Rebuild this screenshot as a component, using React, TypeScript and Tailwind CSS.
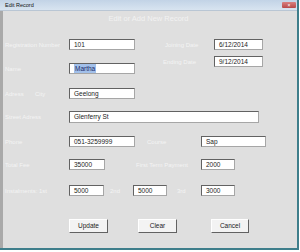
import React from "react";

const label = "text-[6px] leading-none text-[#f4f4f4] whitespace-nowrap";
const box =
  "h-[11px] bg-white border border-[#a6a6a6] border-t-[#626262] border-l-[#626262] pl-[4px] flex items-center text-[6.5px] text-[#1b1b1b] whitespace-nowrap";

function Box({ w, children }: { w: string; children?: React.ReactNode }) {
  return <div className={`${box} ${w}`}>{children}</div>;
}

function Btn({ w, children }: { w: string; children: React.ReactNode }) {
  return (
    <div
      className={`${w} h-[14px] flex items-center justify-center bg-[#f3f3f3] border border-t-white border-l-white border-b-[#626262] border-r-[#626262] text-[6.5px] text-[#1b1b1b]`}
    >
      {children}
    </div>
  );
}

export default function App() {
  return (
    <div className="w-[300px] h-[252px] bg-white font-['Liberation_Sans',sans-serif]">
      <div className="w-[299px] h-[250px] flex flex-col border-r-2 border-b-2 border-[#3e7e8b] bg-[#dfdfdf]">
        {/* title bar */}
        <div className="h-[11px] flex items-center justify-between bg-gradient-to-b from-[#c2d3e6] to-[#d8e4f0] border-b border-[#b9c6d4]">
          <span className="pl-[5px] text-[5.5px] text-[#111]">Edit Record</span>
          <div className="mr-[1px] w-[14px] h-[6px] rounded-[1px] bg-gradient-to-b from-[#d98080] to-[#b84848] flex items-center justify-center text-[5px] leading-none text-white">
            ×
          </div>
        </div>

        <div className="flex-1 flex flex-col border-l-[3px] border-[#a9a9a9] pl-[2px]">
          <div className="h-[16px] flex items-center justify-center pr-[5px] text-[7.5px] text-[#f2f2f2]">
            Edit or Add New Record
          </div>

          {/* top block */}
          <div className="mt-[12px] flex">
            <div className="flex flex-col">
              <div className="flex items-center">
                <span className={`${label} w-[64px]`}>Registration Number</span>
                <Box w="w-[66px]">101</Box>
              </div>
              <div className="mt-[13px] flex items-center">
                <span className={`${label} w-[64px]`}>Name</span>
                <Box w="w-[66px]">
                  <span className="bg-[#a2c0ea] text-[#1a2a66] px-[1px]">Martha</span>
                </Box>
              </div>
            </div>
            <div className="ml-[28px] flex flex-col">
              <div className="flex items-center">
                <span className={`${label} w-[51px] pl-[2px]`}>Joining Date</span>
                <Box w="w-[49px]">6/12/2014</Box>
              </div>
              <div className="mt-[6px] flex items-center">
                <span className={`${label} w-[51px]`}>Ending Date</span>
                <Box w="w-[49px]">9/12/2014</Box>
              </div>
            </div>
          </div>

          <div className="mt-[14px] flex items-center">
            <span className={`${label} w-[30px]`}>Adress</span>
            <span className={`${label} w-[34px]`}>City</span>
            <Box w="w-[66px]">Geelong</Box>
          </div>

          <div className="mt-[12px] flex items-center">
            <span className={`${label} w-[64px]`}>Street Adress</span>
            <Box w="w-[190px] h-[12px]">Glenferry St</Box>
          </div>

          <div className="mt-[13px] flex items-center">
            <span className={`${label} w-[64px]`}>Phone</span>
            <Box w="w-[66px]">051-3259999</Box>
            <span className={`${label} ml-[12px] w-[54px]`}>Course</span>
            <Box w="w-[65px]">Sap</Box>
          </div>

          <div className="mt-[12px] flex items-center">
            <span className={`${label} w-[64px]`}>Total Fee</span>
            <Box w="w-[36px]">35000</Box>
            <span className={`${label} ml-[31px] w-[65px]`}>First Term Payment</span>
            <Box w="w-[34px]">2000</Box>
          </div>

          <div className="mt-[15px] flex items-center">
            <span className={`${label} w-[64px]`}>Instalments: 1st</span>
            <Box w="w-[35px]">5000</Box>
            <span className={`${label} ml-[6px] w-[23px]`}>2nd</span>
            <Box w="w-[34px]">5000</Box>
            <span className={`${label} ml-[10px] w-[24px]`}>3rd</span>
            <Box w="w-[34px]">3000</Box>
          </div>

          <div className="mt-[23px] flex items-center">
            <div className="w-[64px]" />
            <Btn w="w-[39px]">Update</Btn>
            <div className="w-[30px]" />
            <Btn w="w-[39px]">Clear</Btn>
            <div className="w-[34px]" />
            <Btn w="w-[38px]">Cancel</Btn>
          </div>
        </div>
      </div>
    </div>
  );
}
